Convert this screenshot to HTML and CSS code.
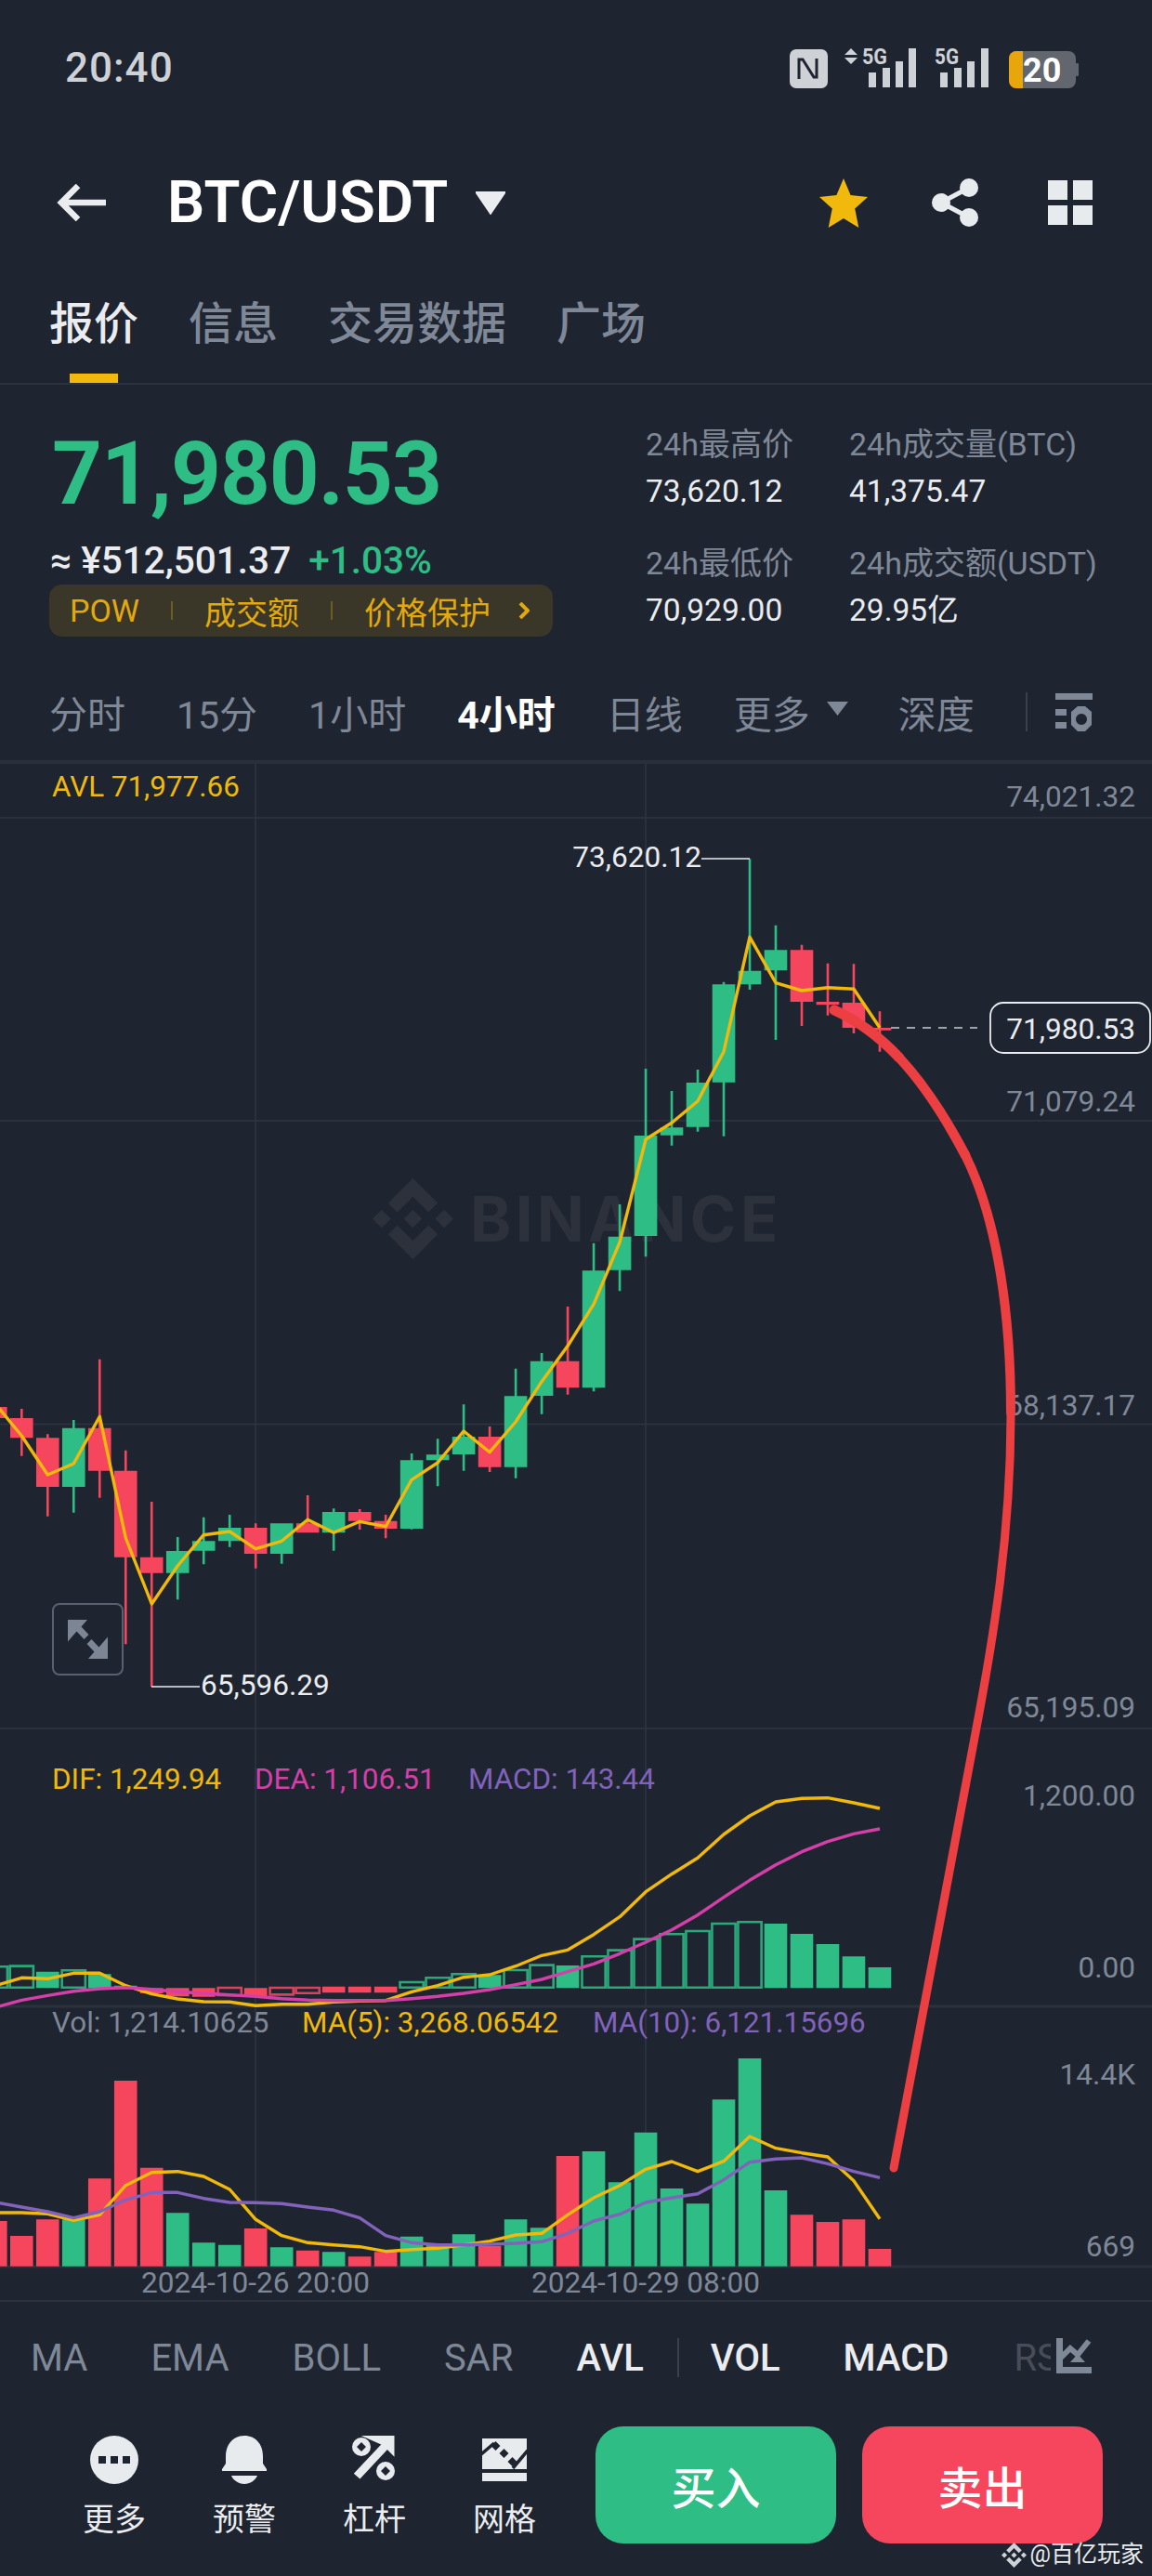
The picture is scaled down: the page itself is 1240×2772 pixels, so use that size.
FILE: index.html
```html
<!DOCTYPE html>
<html lang="zh">
<head>
<meta charset="utf-8">
<title>BTC/USDT</title>
<link rel="stylesheet" href="styles.css">
</head>
<body>
<header class="statusbar">
  <span class="clock">20:40</span>
  <svg class="status-icons" width="311" height="67" viewBox="850 40 311 67">
    <rect class="st-light" x="850" y="53" width="41" height="42" rx="7"/>
    <path class="st-cut" d="M860 85V64h4l12 19h3V63"/>
    <path class="st-light" d="M916 52l7 7h-14zM916 69l-7-7h14z"/>
    <text class="st-5g" x="928" y="69" textLength="27" lengthAdjust="spacingAndGlyphs">5G</text>
    <rect class="st-light" x="935" y="78" width="8" height="16"/><rect class="st-light" x="950" y="73" width="8" height="21"/><rect class="st-light" x="964" y="66" width="8" height="28"/><rect class="st-light" x="978" y="52" width="8" height="42"/>
    <text class="st-5g" x="1006" y="69" textLength="26" lengthAdjust="spacingAndGlyphs">5G</text>
    <rect class="st-light" x="1012" y="78" width="8" height="16"/><rect class="st-light" x="1027" y="73" width="8" height="21"/><rect class="st-light" x="1041" y="66" width="8" height="28"/><rect class="st-light" x="1056" y="52" width="8" height="42"/>
    <rect class="st-batt" x="1086" y="55" width="72" height="40" rx="8"/>
    <rect class="st-batt" x="1158" y="68" width="3" height="14" rx="1"/>
    <path class="st-charge" d="M1101 55h-7a8 8 0 0 0-8 8v24a8 8 0 0 0 8 8h7z"/>
    <text class="st-level" x="1101" y="88">20</text>
  </svg>
</header>

<nav class="navbar">
  <svg class="back" width="53" height="40" viewBox="0 0 53 40"><path d="M53 20H5M23 2L5 20l18 18"/></svg>
  <h1 class="pair">BTC/USDT</h1>
  <svg class="pair-caret" width="32" height="25" viewBox="0 0 32 25"><path d="M1 0h30a1 1 0 0 1 1 2L17 24a1 1 0 0 1-2 0L0 2a1 1 0 0 1 1-2z"/></svg>
  <div class="nav-actions">
    <svg width="52" height="53" viewBox="0 0 52 53"><path class="star" d="M26 0l7.6 17.9 18.4 2-13.800 12.700 4.100 20.400-16.300-10-16.300 10 4.100-20.400L0 19.900l18.400-2z"/></svg>
    <svg width="50" height="52" viewBox="0 0 50 52"><g class="light"><circle cx="10" cy="26" r="10"/><circle cx="40" cy="10" r="10"/><circle cx="40" cy="42" r="10"/></g><path class="share-line" d="M40 10L10 26l30 16"/></svg>
    <svg class="light grid-btn" width="48" height="48" viewBox="0 0 48 48"><rect width="21" height="21"/><rect x="27" width="21" height="21"/><rect y="27" width="21" height="21"/><rect x="27" y="27" width="21" height="21"/></svg>
  </div>
</nav>

<div class="tabs">
  <span class="tab active">报价</span>
  <span class="tab">信息</span>
  <span class="tab">交易数据</span>
  <span class="tab">广场</span>
</div>

<section class="ticker">
  <div class="ticker-main">
    <div class="last-price">71,980.53</div>
    <div class="sub-price"><span>≈ ¥512,501.37</span><span class="change">+1.03%</span></div>
    <div class="pill">
      <span>POW</span><i class="pill-sep"></i><span>成交额</span><i class="pill-sep"></i><span>价格保护</span>
      <svg class="pill-chevron" width="12" height="18" viewBox="0 0 12 18"><path d="M2 1l8 8-8 8"/></svg>
    </div>
  </div>
  <dl class="stats">
    <div><dt>24h最高价</dt><dd>73,620.12</dd></div>
    <div><dt>24h成交量(BTC)</dt><dd>41,375.47</dd></div>
    <div><dt>24h最低价</dt><dd>70,929.00</dd></div>
    <div><dt>24h成交额(USDT)</dt><dd>29.95亿</dd></div>
  </dl>
</section>

<div class="periods">
  <span>分时</span><span>15分</span><span>1小时</span><span class="on">4小时</span><span>日线</span>
  <span class="more">更多<svg width="23" height="15" viewBox="0 0 23 15"><path d="M0 0h23l-11.500 15z"/></svg></span>
  <span>深度</span>
  <i class="period-sep"></i>
  <svg class="period-icon" width="40" height="41" viewBox="0 0 40 41"><rect width="40" height="7"/><rect y="17" width="12" height="7"/><rect y="31" width="12" height="7"/><path fill-rule="evenodd" d="M24 14h8l7 6v14l-7 7h-8l-7-7V20zM28 22a6 6 0 1 0 .01 0z"/></svg>
</div>

<section class="chart">
  <svg class="chart-svg" width="1240" height="1653" viewBox="0 822 1240 1653">
    <g class="grid">
      <path d="M0 880H1240M0 1206H1240M0 1532.500H1240M0 1860H1240M275 822V2439M695 822V2439"/>
      <path class="pane-line" d="M0 2159H1240M0 2439H1240"/>
    </g>
    <g class="watermark">
      <path transform="translate(401 1268) scale(3.625)" d="M16.624 13.9202l2.7175 2.7154-7.353 7.353-7.353-7.352 2.7175-2.7164 4.6355 4.6595 4.6356-4.6595zm4.6366-4.6366L24 12l-2.7154 2.7164L18.5682 12l2.6924-2.7164zm-9.272.001l2.7163 2.6914-2.7164 2.7174v-.001L9.2721 12l2.7164-2.7154zm-9.2722-.001L5.4088 12l-2.6914 2.6924L0 12l2.7164-2.7164zM11.9885.0115l7.353 7.329-2.7174 2.7154-4.6356-4.6356-4.6355 4.6595-2.7174-2.7154 7.353-7.353z"/>
      <text x="506" y="1336">BINANCE</text>
    </g>
    <g id="series"></g>

    <g class="axis">
      <text x="1222" y="868">74,021.32</text>
      <text x="1222" y="1196">71,079.24</text>
      <text x="1222" y="1523">68,137.17</text>
      <text x="1222" y="1848">65,195.09</text>
      <text x="1222" y="1943">1,200.00</text>
      <text x="1222" y="2128">0.00</text>
      <text x="1222" y="2243">14.4K</text>
      <text x="1222" y="2428">669</text>
    </g>
    <g class="dates">
      <text x="275" y="2467">2024-10-26 20:00</text>
      <text x="695" y="2467">2024-10-29 08:00</text>
    </g>
    <g class="legend">
      <text class="c-yellow" x="56" y="857">AVL 71,977.66</text>
      <text class="c-yellow" x="56" y="1925">DIF: 1,249.94</text>
      <text class="c-pink" x="274" y="1925">DEA: 1,106.51</text>
      <text class="c-purple" x="504" y="1925">MACD: 143.44</text>
      <text class="c-grey" x="56" y="2187">Vol: 1,214.10625</text>
      <text class="c-yellow" x="325" y="2187">MA(5): 3,268.06542</text>
      <text class="c-purple" x="638" y="2187">MA(10): 6,121.15696</text>
    </g>

    <path class="leader" d="M755 924H807M163 1815H215"/>
    <text class="mark" x="755" y="933" text-anchor="end">73,620.12</text>
    <text class="mark" x="216" y="1824">65,596.29</text>

    <path class="price-dash" d="M959 1106H1052"/>
    <rect class="price-box" x="1066" y="1079" width="172" height="54" rx="14"/>
    <text class="mark" x="1222" y="1118" text-anchor="end">71,980.53</text>

    <rect class="expand-box" x="57" y="1726" width="75" height="76" rx="7"/>
    <path class="expand" d="M73 1743h21l-6.500 7.500 8 8.500-5 5-8-8.500-9.500 11zM116 1785H95l6.500-7.500-8-8.500 5-5 8 8.500 9.500-11z"/>

    <path class="pen pen-a" d="M898 1087C921.500 1097.500 944.500 1113.250 967.750 1138"/>
    <path class="pen pen-b" d="M967.750 1138C991 1162.750 1014.500 1196.500 1039 1243"/>
    <path class="pen pen-c" d="M1039 1243C1075 1315 1088 1420 1088 1520"/>
    <path class="pen" d="M1088 1520C1088 1650 1070 1760 1049 1870L962 2333"/>
  </svg>
</section>

<div class="indicators">
  <span>MA</span><span>EMA</span><span>BOLL</span><span>SAR</span>
  <span class="on">AVL</span><i class="ind-sep"></i><span class="on">VOL</span><span class="on">MACD</span><span class="clipped">RSI</span>
  <svg class="ind-icon" width="38" height="38" viewBox="0 0 38 38"><path d="M0 0h7v31h31v7H0zM15 26h16l-8-9z"/><path class="ind-zig" d="M5 21l10-10 8 7L35 3"/></svg>
</div>

<footer class="actions">
  <div class="tools">
    <div class="tool">
      <svg width="52" height="52" viewBox="0 0 52 52"><circle class="light" cx="26" cy="26" r="26"/><path class="dark" d="M9 22h8v8H9zM22 22h8v8h-8zM35 22h8v8h-8z"/></svg>
      <span>更多</span>
    </div>
    <div class="tool">
      <svg class="light" width="52" height="52" viewBox="0 0 52 52"><path d="M26 0C14 0 6 9 6 22v8l-4 6v2h48v-2l-4-6v-8C46 9 38 0 26 0zM12 43h28c-2 5-8 9-14 9s-12-4-14-9z"/></svg>
      <span>预警</span>
    </div>
    <div class="tool">
      <svg width="52" height="52" viewBox="0 0 52 52"><g class="light"><path d="M12 2h38v24l-8-8-31 33-7-6 31-33z" transform="translate(0 -2) scale(.95)"/><circle cx="12" cy="12" r="10"/><circle cx="38" cy="38" r="10"/></g><path class="dark" d="M12 7l5 5-5 5-5-5zM38 33l5 5-5 5-5-5z"/></svg>
      <span>杠杆</span>
    </div>
    <div class="tool">
      <svg width="52" height="52" viewBox="0 0 52 52"><rect class="light" x="2" y="3" width="48" height="33"/><rect class="light" x="2" y="40" width="48" height="9"/><path class="grid-zig" d="M1 20L15 8M35 35L51 16"/><path class="dark" d="M16.500 6l5 5-5 5-5-5zM25.500 14l5 5-5 5-5-5zM34.500 23l5 5-5 5-5-5z"/></svg>
      <span>网格</span>
    </div>
  </div>
  <div class="trade">
    <button class="btn buy">买入</button>
    <button class="btn sell">卖出</button>
  </div>
</footer>

<div class="credit">
  <svg width="27" height="27" viewBox="0 0 24 24"><path d="M16.624 13.9202l2.7175 2.7154-7.353 7.353-7.353-7.352 2.7175-2.7164 4.6355 4.6595 4.6356-4.6595zm4.6366-4.6366L24 12l-2.7154 2.7164L18.5682 12l2.6924-2.7164zm-9.272.001l2.7163 2.6914-2.7164 2.7174v-.001L9.2721 12l2.7164-2.7154zm-9.2722-.001L5.4088 12l-2.6914 2.6924L0 12l2.7164-2.7164zM11.9885.0115l7.353 7.329-2.7174 2.7154-4.6356-4.6356-4.6355 4.6595-2.7174-2.7154 7.353-7.353z"/></svg>
  <span>@百亿玩家</span>
</div>
<script src="chart.js"></script>
</body>
</html>
```
FILE: styles.css
```css
* { box-sizing: border-box; }
html, body { margin: 0; padding: 0; }
body {
  position: relative;
  width: 1240px;
  height: 2772px;
  overflow: hidden;
  background: #1f2530;
  color: #eaecef;
  font-family: Roboto, "Noto Sans CJK SC", sans-serif;
}
svg { display: block; flex: none; }
.light { fill: #e8ebee; }
.dark { fill: #1f2530; }

/* status bar */
.statusbar { height: 146px; display: flex; align-items: center; justify-content: space-between; padding: 0 79px 0 70px; }
.clock { font-size: 44px; font-weight: 500; letter-spacing: 1px; color: #ced1d5; }
.st-light { fill: #ced1d5; }
.st-cut { fill: none; stroke: #1f2530; stroke-width: 3; }
.st-5g { font: 700 24px Roboto, sans-serif; fill: #ced1d5; }
.st-batt { fill: #62666e; }
.st-charge { fill: #e8a50c; }
.st-level { font: 700 36px Roboto, sans-serif; fill: #fff; }

/* nav */
.navbar { height: 144px; display: flex; align-items: center; padding: 0 64px 0 61px; }
.back { margin-right: 66px; }
.back path { fill: none; stroke: #eaecef; stroke-width: 6.5; }
.pair { margin: 0; font: 600 63.5px/1 Roboto, sans-serif; color: #fff; }
.pair-caret { margin-left: 30px; }
.pair-caret path { fill: #eaecef; }
.nav-actions { margin-left: auto; display: flex; align-items: center; gap: 69px; }
.grid-btn { margin-left: 6px; }
.star { fill: #f0b90b; }
.share-line { fill: none; stroke: #e8ebee; stroke-width: 5; }

/* tabs */
.tabs { height: 124px; display: flex; gap: 54px; padding: 30px 0 0 53px; border-bottom: 2px solid #2d333e; }
.tab { position: relative; font-size: 48px; line-height: 58px; color: #7f8897; font-weight: 500; height: 92px; }
.tab.active { color: #eaecef; }
.tab.active::after { content: ""; position: absolute; left: 22px; bottom: 0; width: 52px; height: 10px; background: #f0b90b; }

/* ticker */
.ticker { height: 316px; display: flex; padding-left: 54px; }
.ticker-main { width: 641px; padding-top: 48px; }
.last-price { font-size: 94px; line-height: 96px; font-weight: 700; letter-spacing: -1px; color: #2ebd85; margin-left: 2px; }
.sub-price { margin-top: 23px; display: flex; gap: 19px; font-size: 40.5px; line-height: 44px; font-weight: 500; }
.change { color: #2ebd85; }
.pill { margin: 4px 0 0 -1px; width: 542px; height: 56px; padding-left: 22px; border-radius: 14px; background: #3a3729; display: flex; align-items: center; gap: 33px; font-size: 34px; color: #e2a90e; }
.pill-sep { width: 2px; height: 20px; background: #6c5d23; margin: 0 1px; }
.pill-chevron { margin-left: -3px; }
.pill-chevron path { fill: none; stroke: #e2a90e; stroke-width: 4; }
.stats { margin: 42px 0 0; display: grid; grid-template-columns: 219px 1fr; grid-auto-rows: 93px; row-gap: 35px; }
.stats dt { font-size: 34px; line-height: 44px; color: #7f8897; white-space: nowrap; }
.stats dd { margin: 9px 0 0; font-size: 33.5px; line-height: 40px; color: #eaecef; }

/* periods */
.periods { position: relative; height: 88px; padding: 0 0 16px 53px; display: flex; align-items: center; gap: 55px; font-size: 41px; color: #7f8897; }
.periods .on { color: #fff; font-weight: 700; }
.more { display: flex; align-items: center; gap: 18px; margin-right: -1px; }
.more svg { margin-top: -8px; }
.more path { fill: #7f8897; }
.period-sep { width: 2px; height: 42px; background: #3a404c; margin-left: 0; }
.period-icon { margin-left: -25px; fill: #7f8897; }

/* chart */
.chart { border-top: 4px solid #2a303a; }
.chart-svg { font-family: Roboto, sans-serif; font-size: 31.6px; }
.grid path { fill: none; stroke: #2f3541; stroke-width: 1.5; }
.grid .pane-line { stroke: #2c323c; stroke-width: 3; }
.watermark { fill: #2d313c; }
.watermark text { font: 700 67px Inter, sans-serif; letter-spacing: 4.3px; }
.axis text, .dates text { fill: #7f8897; }
.axis { text-anchor: end; }
.dates { text-anchor: middle; }
.legend text { font-size: 31.4px; }
.c-yellow { fill: #f0b90b; }
.c-pink { fill: #d440a8; }
.c-purple { fill: #8262ba; }
.c-grey { fill: #7f8897; }
.leader { fill: none; stroke: #eaecef; stroke-width: 1.500; }
.mark { fill: #eaecef; }
.price-dash { fill: none; stroke: #c9cdd1; stroke-width: 1.500; stroke-dasharray: 9 8; }
.price-box { fill: #1f2530; stroke: #eaecef; stroke-width: 1.800; }
.expand-box { fill: #1f2530; stroke: #596170; stroke-width: 2; }
.expand { fill: #7d8694; }
.pen { fill: none; stroke: #ec3f42; stroke-width: 9; stroke-linecap: round; }
.pen-a { stroke-width: 11; }
.pen-b { stroke-width: 10.500; }
.pen-c { stroke-width: 10; }
.s-up { fill: #2ebd85; }
.s-down { fill: #f6465d; }
.h-up { fill: none; stroke: #2aa87a; stroke-width: 2.600; }
.h-down { fill: none; stroke: #d8425a; stroke-width: 2.600; }
.l-yellow, .l-pink, .l-purple { fill: none; stroke-width: 3.400; stroke-linejoin: round; }
.l-yellow { stroke: #f0b90b; }
.l-pink { stroke: #d440a8; }
.l-purple { stroke: #8262ba; }

/* indicators */
.indicators { position: relative; height: 122px; border-top: 2px solid #2d333e; padding-left: 33px; display: flex; align-items: center; gap: 68px; font-size: 40px; color: #7f8897; }
.indicators .on { color: #eaecef; font-weight: 500; }
.ind-sep { width: 2px; height: 42px; background: #3a404c; margin: 0 -34px 0 -32px; }
.clipped { width: 40px; margin-left: 2px; overflow: hidden; color: #474d59; }
.ind-icon { position: absolute; left: 1137px; top: 39px; fill: #7f8897; }
.ind-zig { fill: none; stroke: #7f8897; stroke-width: 6; }

/* actions */
.actions { display: flex; padding-left: 53px; }
.tools { display: flex; }
.tool { width: 140px; padding-top: 24px; display: flex; flex-direction: column; align-items: center; }
.tool span { margin-top: 20px; font-size: 34px; line-height: 36px; }
.grid-zig { fill: none; stroke: #1f2530; stroke-width: 3.500; }
.trade { margin: 14px 0 0 28px; display: flex; gap: 28px; }
.btn { width: 259px; height: 126px; border: 0; border-radius: 30px; color: #fff; font: 500 48px "Noto Sans CJK SC", sans-serif; }
.buy { background: #2ebd85; }
.sell { background: #f6465d; }

/* overlay credit */
.credit { position: absolute; right: 9px; bottom: 8px; display: flex; align-items: center; gap: 4px; font-size: 25px; line-height: 30px; color: #e8ebee; }
.credit svg { fill: #cfd2d6; }
```
FILE: chart.js
```js
var NS = 'http://www.w3.org/2000/svg';
var root = document.getElementById('series');
function X(i) { return 23.3 + 27.99 * i; }
function add(cls, d) {
  var p = document.createElementNS(NS, 'path');
  p.setAttribute('class', cls);
  p.setAttribute('d', d);
  root.appendChild(p);
}
function box(cx, top, bot, w) {
  return 'M' + (cx - w / 2) + ' ' + top + 'H' + (cx + w / 2) + 'V' + bot + 'H' + (cx - w / 2) + 'z';
}
function line(cls, ys) {
  var d = ys.map(function (y, k) { return (k ? 'L' : 'M') + X(k - 1).toFixed(1) + ' ' + y; }).join('');
  add(cls, d);
}
// colour, wick top, wick bottom, body top, body bottom; first entry is index -1
var candles = [
  'd',1505,1530,1514,1526, 'd',1516,1566.7,1526,1547.3, 'd',1543.3,1631.7,1547.3,1600, 'u',1528,1627.7,1536.7,1600,
  'd',1462.7,1611.7,1536.7,1582.7, 'd',1560.7,1769.3,1582.7,1675.7, 'd',1616,1815,1675.7,1692.7, 'u',1654,1721.3,1669,1692.7,
  'u',1632.7,1683.3,1658.3,1668.7, 'u',1630,1664.7,1644,1658.3, 'd',1639.3,1687.7,1644,1672, 'u',1639.3,1682.7,1639.3,1672,
  'd',1609,1649.3,1639.3,1649.3, 'u',1623.3,1668.7,1627,1649.3, 'd',1624,1646,1627,1636.7, 'd',1630,1655.3,1636.7,1645,
  'u',1564,1645.7,1571.3,1645, 'u',1548.3,1599.3,1565.3,1571.3, 'u',1511.3,1582.7,1546,1565, 'd',1535,1584,1546,1578.7,
  'u',1472.7,1590.7,1502.3,1578.7, 'u',1456,1521.7,1464.7,1502, 'd',1406,1500.7,1464.7,1493.3, 'u',1337.7,1497.3,1367.3,1493.3,
  'u',1296,1389.3,1330.7,1366.7, 'u',1150,1352.3,1222,1330, 'u',1174,1232.7,1213.3,1221.7, 'u',1151,1217.7,1165,1212.7,
  'u',1056.7,1222.7,1059.3,1164.7, 'u',924.3,1065,1044.7,1059.3, 'u',995.7,1119,1022.3,1044.3, 'd',1016.7,1104,1022.3,1078,
  'd',1036.7,1092.7,1078,1081.3, 'd',1037.3,1112,1079,1106, 'd',1088.3,1131.7,1106,1108.7
];
var up = '', down = '';
for (var c = 0; c < candles.length; c += 5) {
  var cx = X(c / 5 - 1);
  var s = box(cx, candles[c + 1], candles[c + 2], 2.6) + box(cx, candles[c + 3], candles[c + 4], 24.6);
  if (candles[c] === 'u') up += s; else down += s;
}
add('s-up', up);
add('s-down', down);

// MACD histogram: top, bottom, kind (s solid, h hollow)
var hist = [
  2115,2140,'hu', 2114.3,2140,'hu', 2121.7,2139.3,'su', 2119,2140,'hu', 2124.3,2139.3,'su', 2136.7,2139.3,'su',
  2139.3,2145,'sd', 2139.3,2148.3,'sd', 2139.3,2148.7,'sd', 2137.7,2148.3,'hd', 2139.3,2148.3,'sd', 2137.7,2147.7,'hd',
  2137.7,2146,'hd', 2137.7,2144.3,'sd', 2137.7,2144.3,'sd', 2137.7,2144.3,'sd', 2131.7,2140,'hu', 2127,2140,'hu',
  2123,2140,'hu', 2125.3,2139.3,'su', 2118.7,2140,'hu', 2113.3,2140,'hu', 2115,2139.3,'su', 2104,2140,'hu',
  2097.3,2140,'hu', 2085.3,2140,'hu', 2080,2140,'hu', 2076.7,2140,'hu', 2068.7,2140,'hu', 2067,2140,'hu',
  2070,2139.3,'su', 2081,2139.3,'su', 2092,2139.3,'su', 2105.3,2139.3,'su', 2117,2139.3,'su'
];
var paths = { su: '', sd: '', hu: '', hd: '' };
for (var h = 0; h < hist.length; h += 3) {
  var hx = X(h / 3 - 1), k = hist[h + 2];
  if (k[0] === 'h') paths[k] += box(hx, hist[h] + 1.3, hist[h + 1] - 1.3, 25.2);
  else paths[k] += box(hx, hist[h], hist[h + 1], 24.6);
}
add('s-up', paths.su);
add('s-down', paths.sd);
add('h-up', paths.hu);
add('h-down', paths.hd);

// Volume bars: colour, top
var vol = [
  'd',2390,'d',2406,'d',2388.3,'u',2388.3,'d',2344.3,'d',2239,'d',2332.7,'u',2381.3,'u',2413.3,'u',2415.7,'d',2398,
  'u',2418.3,'d',2421.7,'u',2423.3,'d',2428.3,'d',2423.3,'u',2406.7,'u',2415,'u',2404.3,'d',2416.7,'u',2388.3,'u',2397.3,
  'd',2320,'u',2315,'u',2348.3,'u',2294.7,'u',2355,'u',2371.3,'u',2259.3,'u',2215,'u',2357,'d',2383.3,'d',2391,'d',2388.3,'d',2420
];
var vu = '', vd = '';
for (var v = 0; v < vol.length; v += 2) {
  var b = box(X(v / 2 - 1), vol[v + 1], 2438.7, 24.6);
  if (vol[v] === 'u') vu += b; else vd += b;
}
add('s-up', vu);
add('s-down', vd);

line('l-yellow', [1511,1545,1587,1575,1524.3,1655,1726,1685,1651.7,1648,1666.7,1658.3,1635.3,1649.3,1637.3,1642.7,1592.3,1574,1540,1562.7,1530,1486.7,1448.3,1403.3,1336.7,1226,1208.3,1185,1131.7,1008.3,1057.7,1066,1062.7,1064.3,1106]);
line('l-yellow', [2136.7,2128.3,2129.3,2123.3,2123.3,2136.7,2145.7,2151,2154,2154.3,2158.3,2156.7,2156.7,2154.3,2153.3,2152.7,2143.3,2136.7,2127.7,2125,2115.7,2104.3,2098.3,2081.7,2062.7,2035.7,2016.7,1999.3,1974,1954,1939,1935.3,1934.7,1940,1946]);
line('l-pink', [2160,2152.3,2147.3,2142.7,2140,2138.7,2140.7,2143.3,2145,2146.7,2148.3,2150.7,2152.3,2152.7,2152.7,2152.7,2150.7,2148.3,2145,2141,2135.7,2130,2121.7,2113.3,2102.3,2090,2076.7,2060.7,2041.7,2023.3,2006.7,1992.7,1981.7,1973.3,1968]);
line('l-yellow', [2381,2381,2382.3,2389.3,2383.3,2351.7,2337.7,2336.7,2342,2356,2388.3,2405.7,2413.3,2415.7,2417.7,2422.7,2420.7,2419.3,2415.7,2411.7,2405,2403.3,2383.3,2365,2351.7,2334.3,2326,2336.7,2325.7,2299,2311.7,2316.7,2321,2346.7,2387.7]);
line('l-purple', [2370,2375,2380,2386.7,2380,2367.3,2359.3,2359.3,2365.7,2370,2370.3,2371.3,2375,2378.3,2386.7,2405.7,2413.3,2415.7,2415.7,2415,2414,2412.3,2403.3,2390,2382.7,2370,2365,2360.7,2345.7,2326.7,2323.3,2322,2328.3,2336.7,2343.3]);
```
